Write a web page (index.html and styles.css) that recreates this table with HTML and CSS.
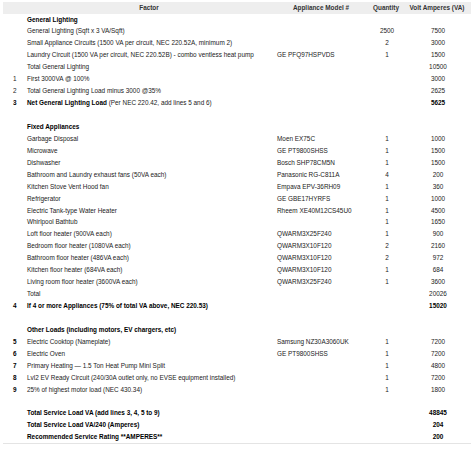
FILE: index.html
```html
<!DOCTYPE html>
<html>
<head>
<meta charset="utf-8">
<link rel="stylesheet" href="styles.css">
</head>
<body>
<table class="calc">
  <colgroup>
    <col class="c-num"><col class="c-factor"><col class="c-model"><col class="c-qty"><col class="c-va">
  </colgroup>
  <thead>
    <tr><th></th><th>Factor</th><th>Appliance Model #</th><th>Quantity</th><th>Volt Amperes (VA)</th></tr>
  </thead>
  <tbody>
    <tr class="b"><td></td><td>General Lighting</td><td></td><td></td><td></td></tr>
    <tr><td></td><td>General Lighting (Sqft x 3 VA/Sqft)</td><td></td><td>2500</td><td>7500</td></tr>
    <tr><td></td><td>Small Appliance Circuits (1500 VA per circuit, NEC 220.52A, minimum 2)</td><td></td><td>2</td><td>3000</td></tr>
    <tr><td></td><td>Laundry Circuit (1500 VA per circuit, NEC 220.52B) - combo ventless heat pump</td><td>GE PFQ97HSPVDS</td><td>1</td><td>1500</td></tr>
    <tr><td></td><td>Total General Lighting</td><td></td><td></td><td>10500</td></tr>
    <tr><td>1</td><td>First 3000VA @ 100%</td><td></td><td></td><td>3000</td></tr>
    <tr><td>2</td><td>Total General Lighting Load minus 3000 @35%</td><td></td><td></td><td>2625</td></tr>
    <tr><td class="b">3</td><td><b>Net General Lighting Load</b> (Per NEC 220.42, add lines 5 and 6)</td><td></td><td></td><td class="b">5625</td></tr>
    <tr><td></td><td></td><td></td><td></td><td></td></tr>
    <tr class="b"><td></td><td>Fixed Appliances</td><td></td><td></td><td></td></tr>
    <tr><td></td><td>Garbage Disposal</td><td>Moen EX75C</td><td>1</td><td>1000</td></tr>
    <tr><td></td><td>Microwave</td><td>GE PT9800SHSS</td><td>1</td><td>1500</td></tr>
    <tr><td></td><td>Dishwasher</td><td>Bosch SHP78CM5N</td><td>1</td><td>1500</td></tr>
    <tr><td></td><td>Bathroom and Laundry exhaust fans (50VA each)</td><td>Panasonic RG-C811A</td><td>4</td><td>200</td></tr>
    <tr><td></td><td>Kitchen Stove Vent Hood fan</td><td>Empava EPV-36RH09</td><td>1</td><td>360</td></tr>
    <tr><td></td><td>Refrigerator</td><td>GE GBE17HYRFS</td><td>1</td><td>1000</td></tr>
    <tr><td></td><td>Electric Tank-type Water Heater</td><td>Rheem XE40M12CS45U0</td><td>1</td><td>4500</td></tr>
    <tr><td></td><td>Whirlpool Bathtub</td><td></td><td>1</td><td>1650</td></tr>
    <tr><td></td><td>Loft floor heater (900VA each)</td><td>QWARM3X25F240</td><td>1</td><td>900</td></tr>
    <tr><td></td><td>Bedroom floor heater (1080VA each)</td><td>QWARM3X10F120</td><td>2</td><td>2160</td></tr>
    <tr><td></td><td>Bathroom floor heater (486VA each)</td><td>QWARM3X10F120</td><td>2</td><td>972</td></tr>
    <tr><td></td><td>Kitchen floor heater (684VA each)</td><td>QWARM3X10F120</td><td>1</td><td>684</td></tr>
    <tr><td></td><td>Living room floor heater (3600VA each)</td><td>QWARM3X25F240</td><td>1</td><td>3600</td></tr>
    <tr><td></td><td>Total</td><td></td><td></td><td>20026</td></tr>
    <tr class="b"><td>4</td><td>If 4 or more Appliances (75% of total VA above, NEC 220.53)</td><td></td><td></td><td>15020</td></tr>
    <tr><td></td><td></td><td></td><td></td><td></td></tr>
    <tr class="b"><td></td><td>Other Loads (including motors, EV chargers, etc)</td><td></td><td></td><td></td></tr>
    <tr><td class="b">5</td><td>Electric Cooktop (Nameplate)</td><td>Samsung NZ30A3060UK</td><td>1</td><td>7200</td></tr>
    <tr><td class="b">6</td><td>Electric Oven</td><td>GE PT9800SHSS</td><td>1</td><td>7200</td></tr>
    <tr><td class="b">7</td><td>Primary Heating — 1.5 Ton Heat Pump Mini Split</td><td></td><td>1</td><td>4800</td></tr>
    <tr><td class="b">8</td><td>Lvl2 EV Ready Circuit (240/30A outlet only, no EVSE equipment installed)</td><td></td><td>1</td><td>7200</td></tr>
    <tr><td class="b">9</td><td>25% of highest motor load (NEC 430.34)</td><td></td><td>1</td><td>1800</td></tr>
    <tr><td></td><td></td><td></td><td></td><td></td></tr>
    <tr class="b"><td></td><td>Total Service Load VA (add lines 3, 4, 5 to 9)</td><td></td><td></td><td>48845</td></tr>
    <tr class="b"><td></td><td>Total Service Load VA/240 (Amperes)</td><td></td><td></td><td>204</td></tr>
    <tr class="b last"><td></td><td>Recommended Service Rating **AMPERES**</td><td></td><td></td><td>200</td></tr>
  </tbody>
</table>
</body>
</html>
```
FILE: styles.css
```css
html, body {
  margin: 0;
  padding: 0;
  background: #ffffff;
}
body {
  padding: 2px 3px 0 3px;
  font-family: "Liberation Sans", Arial, sans-serif;
  font-size: 6.4px;
  color: #222222;
}
.calc {
  width: 468px;
  border-collapse: collapse;
  table-layout: fixed;
}
.c-num { width: 22px; }
.c-factor { width: 248px; }
.c-model { width: 96px; }
.c-qty { width: 34px; }
.c-va { width: 68px; }
.calc th {
  background: #eeeeee;
  height: 11.5px;
  padding: 0;
  font-weight: bold;
  color: #333333;
  text-align: center;
  white-space: nowrap;
  line-height: 11.5px;
}
.calc td {
  height: 11.94px;
  padding: 0;
  line-height: 11.94px;
  white-space: nowrap;
  overflow: hidden;
  vertical-align: middle;
}
.calc td:nth-child(1) { padding-left: 10px; }
.calc td:nth-child(2) { padding-left: 2px; }
.calc td:nth-child(3) { padding-left: 4px; }
.calc td:nth-child(4) { text-align: center; padding-left: 2px; }
.calc td:nth-child(5) { text-align: center; padding-left: 2px; }
.b td, td.b, .calc b {
  font-weight: bold;
  color: #000000;
}
.last td {
  border-bottom: 1px solid #e4e4e4;
}
```
